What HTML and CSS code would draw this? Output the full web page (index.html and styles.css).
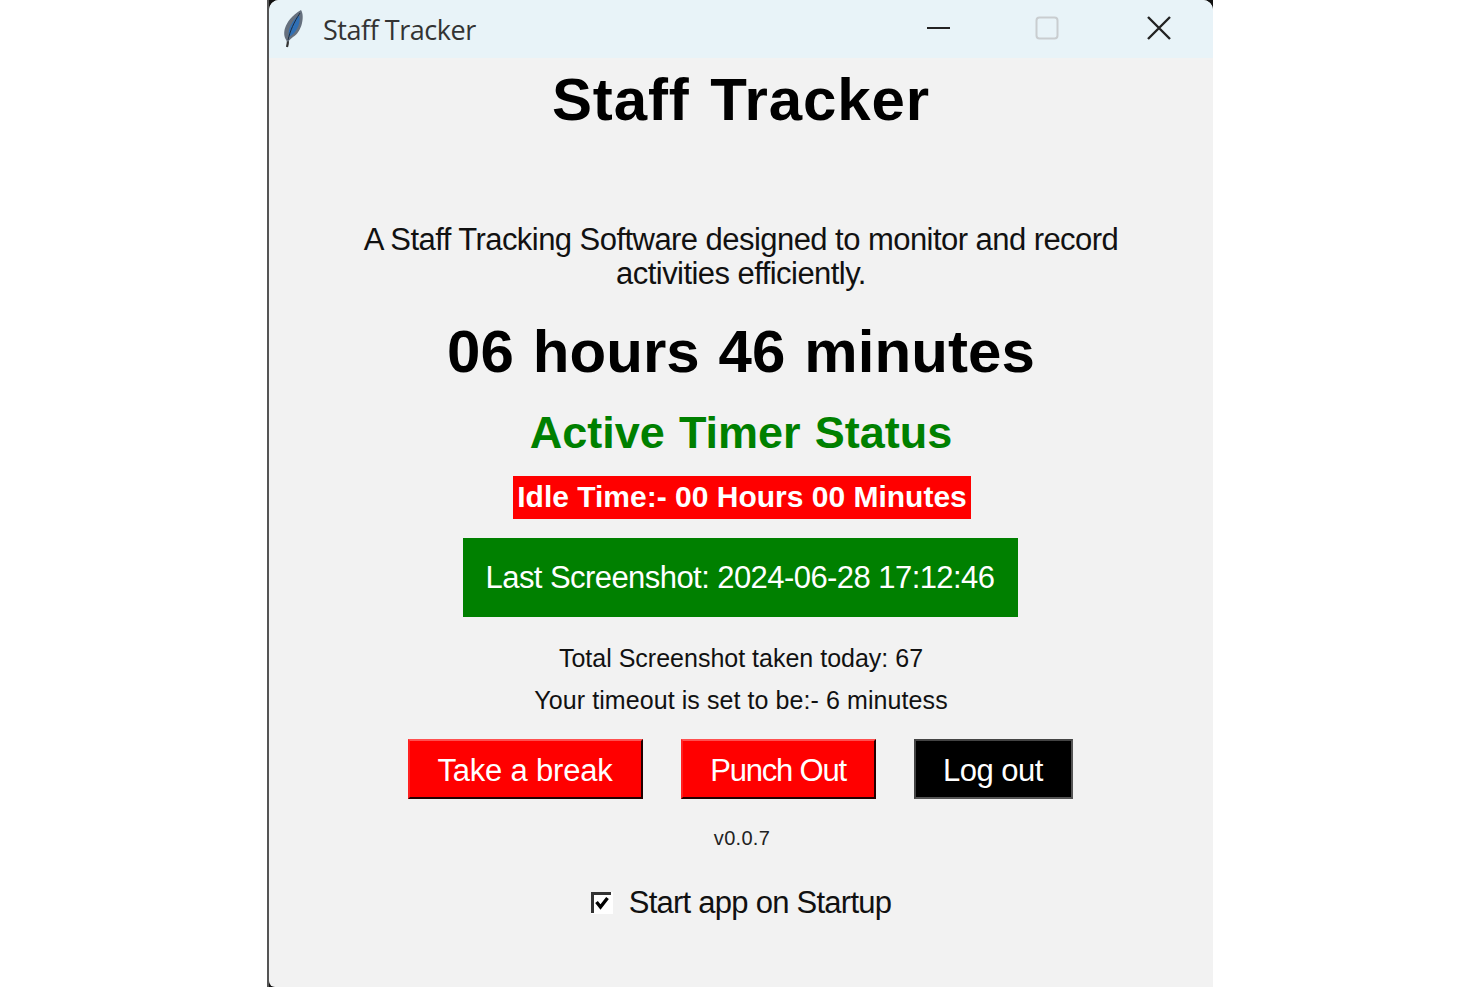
FILE: index.html
```html
<!DOCTYPE html>
<html lang="en">
<head>
<meta charset="utf-8">
<title>Staff Tracker</title>
<link rel="stylesheet" href="styles.css">
</head>
<body>
<div class="shell">
  <div class="window">
    <header class="titlebar">
      <svg class="feather" viewBox="0 0 26 40" width="26" height="40" aria-hidden="true">
        <path d="M8 38 C9 35 9 33 9 30" stroke="#333" stroke-width="2.2" fill="none"/>
        <path d="M9 33 C2 27 4 12 22 1 C26 7 23 23 14 28 C12 30 10 31 9 33Z" fill="#66707e"/>
        <path d="M10 28 C8 20 14 11 20 6 C22 12 19 21 13 26Z" fill="#2f6fb5"/>
        <path d="M9 31 C11 22 15 13 21 4" stroke="#1c2c40" stroke-width="1" fill="none"/>
      </svg>
      <span class="wintitle">Staff Tracker</span>
      <div class="controls">
        <svg class="ctl" viewBox="0 0 23 30" width="23" height="30" aria-hidden="true"><path d="M0 15H23" stroke="#222" stroke-width="2"/></svg>
        <svg class="ctl ctl-max" viewBox="0 0 26 26" width="26" height="26" aria-hidden="true"><rect x="2.5" y="2.5" width="21" height="21" rx="3" fill="none" stroke="#c9cdd0" stroke-width="2"/></svg>
        <svg class="ctl ctl-close" viewBox="0 0 26 26" width="26" height="26" aria-hidden="true"><path d="M2 2L24 24M24 2L2 24" stroke="#222" stroke-width="2.4"/></svg>
      </div>
    </header>
    <main class="content">
      <h1 class="title">Staff Tracker</h1>
      <p class="desc">A Staff Tracking Software designed to monitor and record<br>activities efficiently.</p>
      <div class="timer">06 hours 46 minutes</div>
      <div class="status">Active Timer Status</div>
      <div class="idle">Idle Time:- 00 Hours 00 Minutes</div>
      <div class="shot">Last Screenshot: 2024-06-28 17:12:46</div>
      <div class="info info-first">Total Screenshot taken today: 67</div>
      <div class="info info-second">Your timeout is set to be:- 6 minutess</div>
      <div class="buttons">
        <button class="btn btn-break">Take a break</button>
        <button class="btn btn-punch">Punch Out</button>
        <button class="btn btn-logout">Log out</button>
      </div>
      <div class="version">v0.0.7</div>
      <label class="startup">
        <svg class="check" viewBox="0 0 22 22" width="22" height="22" aria-hidden="true">
          <rect x="0" y="0" width="22" height="22" fill="#fff"/>
          <path d="M1.5 21V1.5H20" stroke="#333" stroke-width="3" fill="none"/>
          <path d="M5.5 10L9.5 15L16.5 6" stroke="#000" stroke-width="3.4" fill="none"/>
        </svg>
        <span>Start app on Startup</span>
      </label>
    </main>
  </div>
</div>
</body>
</html>
```
FILE: styles.css
```css
* { box-sizing: border-box; }
html, body { margin: 0; height: 100%; background: #fff; overflow: hidden; }
body {
  display: flex;
  justify-content: center;
  font-family: "Liberation Sans", Arial, sans-serif;
}
.shell {
  width: 946px;
  height: 987px;
  padding-left: 2px;
  background: linear-gradient(to right, #555 2px, #111 2px);
}
.window {
  height: 100%;
  background: #f2f2f2;
  border-radius: 10px 10px 0 6px;
  overflow: hidden;
  display: flex;
  flex-direction: column;
}
.titlebar {
  height: 58px;
  flex: none;
  background: #e8f3f8;
  display: flex;
  align-items: center;
  padding-left: 10px;
}
.feather { flex: none; margin-top: -1px; }
.wintitle {
  margin-left: 18px;
  font-family: "Open Sans", "Noto Sans", sans-serif;
  font-size: 27px;
  color: #333;
  letter-spacing: -0.47px;
  margin-top: 1px;
}
.controls {
  margin-left: auto;
  display: flex;
  align-items: center;
  margin-right: 41px;
  margin-top: -3px;
}
.ctl { display: block; }
.ctl-max { margin-left: 84px; }
.ctl-close { margin-left: 86px; }
.content {
  flex: 1;
  display: flex;
  flex-direction: column;
  align-items: center;
}
.title {
  margin: 9px 0 0;
  font-size: 60px;
  line-height: 66px;
  font-weight: 700;
  color: #000;
  letter-spacing: 0.9px;
  word-spacing: 3px;
}
.desc {
  margin: 90px 0 0;
  font-size: 31px;
  line-height: 34px;
  text-align: center;
  color: #111;
  letter-spacing: -0.55px;
}
.timer {
  margin-top: 28px;
  font-size: 60px;
  line-height: 66px;
  font-weight: 700;
  color: #000;
  letter-spacing: 0.1px;
  word-spacing: 2px;
}
.status {
  margin-top: 23px;
  font-size: 45px;
  line-height: 50px;
  font-weight: 700;
  color: #008000;
  word-spacing: 1.5px;
}
.idle {
  margin-top: 18px;
  margin-left: 2px;
  height: 43px;
  width: 458px;
  background: #ff0000;
  color: #fff;
  font-size: 30px;
  line-height: 42px;
  font-weight: 700;
  text-align: center;
  white-space: nowrap;
}
.shot {
  margin-top: 19px;
  margin-right: 2px;
  width: 555px;
  height: 79px;
  background: #008000;
  color: #fff;
  font-size: 31px;
  line-height: 79px;
  text-align: center;
  letter-spacing: -0.56px;
}
.info {
  font-size: 25px;
  line-height: 30px;
  color: #111;
}
.info-first { margin-top: 26px; }
.info-second { margin-top: 12px; letter-spacing: 0.08px; }
.buttons {
  margin-top: 24px;
  margin-right: 2px;
  display: flex;
  gap: 38px;
  height: 60px;
}
.btn {
  height: 60px;
  padding: 3px 0 0;
  font: inherit;
  font-size: 31px;
  color: #fff;
  border: 2px solid;
  letter-spacing: -0.2px;
}
.btn-break, .btn-punch {
  background: #ff0000;
  border-color: #ff5050 #200 #200 #ff2020;
}
.btn-break { width: 235px; }
.btn-punch { width: 195px; letter-spacing: -1.2px; }
.btn-logout {
  width: 159px;
  background: #000;
  border-color: #444 #555 #555 #444;
  letter-spacing: -0.5px;
}
.version {
  margin-top: 27px;
  margin-left: 2px;
  font-size: 20px;
  line-height: 24px;
  color: #222;
  letter-spacing: 0.3px;
}
.startup {
  margin-top: 35px;
  display: flex;
  align-items: center;
  gap: 16px;
  font-size: 31px;
  line-height: 36px;
  color: #111;
  letter-spacing: -0.75px;
}
.check { flex: none; }
```
